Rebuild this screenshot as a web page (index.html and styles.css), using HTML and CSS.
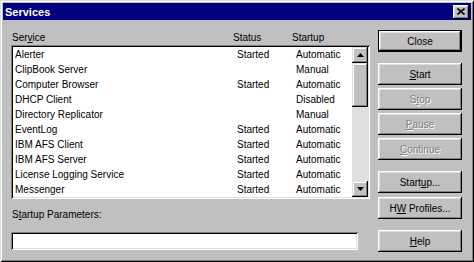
FILE: index.html
```html
<!DOCTYPE html>
<html lang="en">
<head>
    <meta charset="UTF-8">
    <title>Services</title>
    <link rel="stylesheet" href="styles.css">
</head>
<body>
    <div class="window">
        <div class="titlebar">
            <span class="title">Services</span>
            <span class="title-close">
                <svg width="8" height="7" viewBox="0 0 8 7"><path d="M0.5 0.5 L7.5 6.5 M7.5 0.5 L0.5 6.5" stroke="#000" stroke-width="1.6"/></svg>
            </span>
        </div>

        <div class="content">
            <div class="main">
                <div class="list-head">
                    <span>Ser<u>v</u>ice</span>
                    <span>Status</span>
                    <span>Startup</span>
                </div>

                <div class="listbox">
                    <div class="rows">
                        <div class="row"><span>Alerter</span><span>Started</span><span>Automatic</span></div>
                        <div class="row"><span>ClipBook Server</span><span></span><span>Manual</span></div>
                        <div class="row"><span>Computer Browser</span><span>Started</span><span>Automatic</span></div>
                        <div class="row"><span>DHCP Client</span><span></span><span>Disabled</span></div>
                        <div class="row"><span>Directory Replicator</span><span></span><span>Manual</span></div>
                        <div class="row"><span>EventLog</span><span>Started</span><span>Automatic</span></div>
                        <div class="row"><span>IBM AFS Client</span><span>Started</span><span>Automatic</span></div>
                        <div class="row"><span>IBM AFS Server</span><span>Started</span><span>Automatic</span></div>
                        <div class="row"><span>License Logging Service</span><span>Started</span><span>Automatic</span></div>
                        <div class="row"><span>Messenger</span><span>Started</span><span>Automatic</span></div>
                    </div>
                    <div class="scrollbar">
                        <div class="scroll-btn">
                            <svg width="7" height="4" viewBox="0 0 7 4"><path d="M3.5 0 L7 4 L0 4 Z" fill="#000"/></svg>
                        </div>
                        <div class="scroll-track">
                            <div class="scroll-thumb"></div>
                        </div>
                        <div class="scroll-btn">
                            <svg width="7" height="4" viewBox="0 0 7 4"><path d="M0 0 L7 0 L3.5 4 Z" fill="#000"/></svg>
                        </div>
                    </div>
                </div>

                <div class="param-label">S<u>t</u>artup Parameters:</div>
                <div class="param-input"></div>
            </div>

            <div class="buttons">
                <button class="btn default">Close</button>
                <button class="btn gap-big"><u>S</u>tart</button>
                <button class="btn gap-small" disabled>S<u>t</u>op</button>
                <button class="btn gap-small" disabled><u>P</u>ause</button>
                <button class="btn gap-small" disabled><u>C</u>ontinue</button>
                <button class="btn gap-big">Start<u>u</u>p...</button>
                <button class="btn gap-mid">H<u>W</u> Profiles...</button>
                <button class="btn gap-big"><u>H</u>elp</button>
            </div>
        </div>
    </div>
</body>
</html>
```

FILE: styles.css
```css
body {
    margin: 0;
    font-family: "Liberation Sans", Arial, sans-serif;
    font-size: 10px;
    color: #000;
    background: #c0c0c0;
}

.window {
    width: 474px;
    height: 262px;
    box-sizing: border-box;
    padding: 3px;
    background: #c0c0c0;
    box-shadow: inset 1px 1px #dfdfdf, inset -1px -1px #000,
                inset 2px 2px #fff, inset -2px -2px #808080;
}

.titlebar {
    height: 17px;
    background: #000080;
    display: flex;
    align-items: center;
    justify-content: space-between;
    padding: 0 2px 0 2px;
}

.title {
    color: #fff;
    font-weight: bold;
    font-size: 11px;
}

.title-close {
    width: 16px;
    height: 14px;
    box-sizing: border-box;
    background: #c0c0c0;
    display: flex;
    align-items: center;
    justify-content: center;
    box-shadow: inset -1px -1px #000, inset 1px 1px #fff,
                inset -2px -2px #808080, inset 2px 2px #dfdfdf;
}

.content {
    display: flex;
    gap: 8px;
    padding: 10px 9px 0 8px;
}

.main {
    width: 359px;
}

.list-head {
    height: 15px;
    line-height: 15px;
    display: grid;
    grid-template-columns: 221px 59px 1fr;
    padding-left: 1px;
}

.listbox {
    height: 154px;
    box-sizing: border-box;
    padding: 2px;
    display: flex;
    background: #fff;
    box-shadow: inset 1px 1px #808080, inset -1px -1px #fff,
                inset 2px 2px #000, inset -2px -2px #dfdfdf;
}

.rows {
    flex: 1;
}

.row {
    height: 15px;
    line-height: 15px;
    display: grid;
    grid-template-columns: 222px 59px 1fr;
    padding-left: 2px;
    white-space: nowrap;
}

.scrollbar {
    width: 16px;
    display: flex;
    flex-direction: column;
}

.scroll-btn {
    height: 16px;
    background: #c0c0c0;
    display: flex;
    align-items: center;
    justify-content: center;
    box-shadow: inset -1px -1px #000, inset 1px 1px #dfdfdf,
                inset -2px -2px #808080, inset 2px 2px #fff;
}

.scroll-track {
    flex: 1;
    background: #e0e0e0;
}

.scroll-thumb {
    height: 44px;
    background: #c0c0c0;
    box-shadow: inset -1px -1px #000, inset 1px 1px #dfdfdf,
                inset -2px -2px #808080, inset 2px 2px #fff;
}

.param-label {
    margin-top: 9px;
    height: 14px;
    line-height: 14px;
    padding-left: 1px;
}

.param-input {
    margin-top: 10px;
    width: 347px;
    height: 18px;
    box-sizing: border-box;
    background: #fff;
    box-shadow: inset 1px 1px #808080, inset -1px -1px #fff,
                inset 2px 2px #000, inset -2px -2px #dfdfdf;
}

.buttons {
    width: 84px;
    display: flex;
    flex-direction: column;
}

.btn {
    height: 22px;
    padding: 0;
    border: none;
    font-family: inherit;
    font-size: 10px;
    color: #000;
    background: #c0c0c0;
    box-shadow: inset -1px -1px #000, inset 1px 1px #fff,
                inset -2px -2px #808080, inset 2px 2px #dfdfdf;
}

.btn.default {
    border: 1px solid #000;
}

.btn:disabled {
    color: #808080;
    text-shadow: 1px 1px #fff;
}

.gap-big {
    margin-top: 11px;
}

.gap-mid {
    margin-top: 4px;
}

.gap-small {
    margin-top: 3px;
}
```
